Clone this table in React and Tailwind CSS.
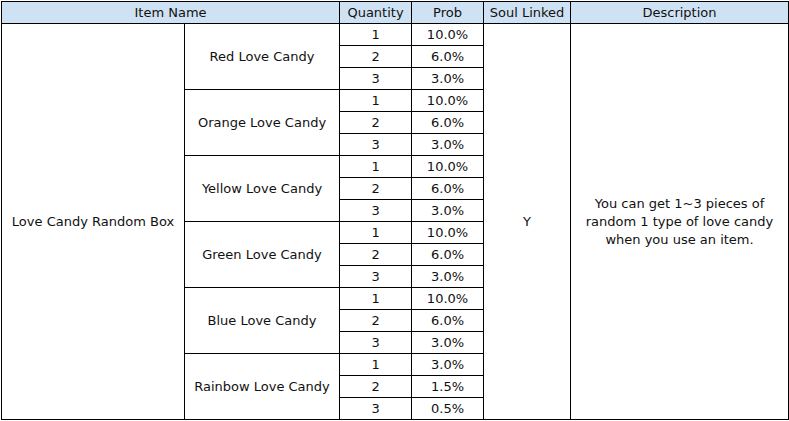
const candies = [
  { name: 'Red Love Candy', probs: ['10.0%', '6.0%', '3.0%'] },
  { name: 'Orange Love Candy', probs: ['10.0%', '6.0%', '3.0%'] },
  { name: 'Yellow Love Candy', probs: ['10.0%', '6.0%', '3.0%'] },
  { name: 'Green Love Candy', probs: ['10.0%', '6.0%', '3.0%'] },
  { name: 'Blue Love Candy', probs: ['10.0%', '6.0%', '3.0%'] },
  { name: 'Rainbow Love Candy', probs: ['3.0%', '1.5%', '0.5%'] },
];

const cell = 'border border-black text-center align-middle p-0';

export default function App() {
  return (
    <div className="bg-white w-[789px] h-[421px] pt-px pl-px" style={{ fontFamily: '"DejaVu Sans", Verdana, sans-serif' }}>
      <table className="table-fixed border-collapse text-[13px] text-[#111] w-[787px]">
        <colgroup>
          <col className="w-[183px]" />
          <col className="w-[155px]" />
          <col className="w-[72px]" />
          <col className="w-[72px]" />
          <col className="w-[87px]" />
          <col className="w-[218px]" />
        </colgroup>
        <thead>
          <tr className="h-[22px] bg-[#cfe2f3]">
            <th colSpan={2} className={`${cell} font-normal`}>Item Name</th>
            <th className={`${cell} font-normal`}>Quantity</th>
            <th className={`${cell} font-normal`}>Prob</th>
            <th className={`${cell} font-normal`}>Soul Linked</th>
            <th className={`${cell} font-normal`}>Description</th>
          </tr>
        </thead>
        <tbody>
          {candies.map((c, ci) =>
            c.probs.map((p, i) => (
              <tr key={`${ci}-${i}`} className="h-[22px]">
                {ci === 0 && i === 0 && (
                  <td rowSpan={18} className={cell}>Love Candy Random Box</td>
                )}
                {i === 0 && (
                  <td rowSpan={3} className={cell}>{c.name}</td>
                )}
                <td className={cell}>{i + 1}</td>
                <td className={cell}>{p}</td>
                {ci === 0 && i === 0 && (
                  <>
                    <td rowSpan={18} className={cell}>Y</td>
                    <td rowSpan={18} className={`${cell} px-2 leading-[18px]`}>
                      You can get 1~3 pieces of<br />
                      random 1 type of love candy<br />
                      when you use an item.
                    </td>
                  </>
                )}
              </tr>
            ))
          )}
        </tbody>
      </table>
    </div>
  );
}
